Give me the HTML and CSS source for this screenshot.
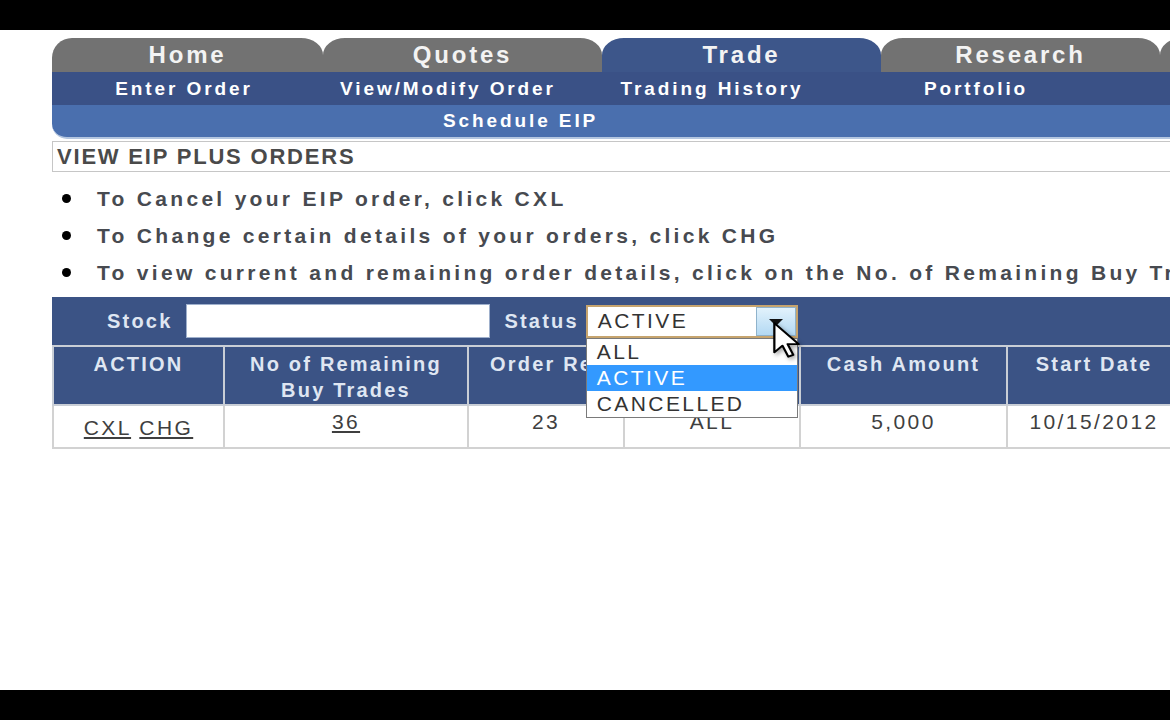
FILE: index.html
```html
<!DOCTYPE html>
<html lang="en">
<head>
<meta charset="utf-8">
<title>View EIP Plus Orders</title>
<link rel="stylesheet" href="styles.css">
</head>
<body>
<div class="screen">
  <div class="letterbox"></div>
  <main class="page">
    <nav class="nav">
      <div class="tabs">
        <a class="tab tab-home">Home</a>
        <a class="tab">Quotes</a>
        <a class="tab tab-active">Trade</a>
        <a class="tab">Research</a>
        <a class="tab"></a>
      </div>
      <div class="subnav">
        <a>Enter Order</a>
        <a>View/Modify Order</a>
        <a>Trading History</a>
        <a>Portfolio</a>
      </div>
      <div class="subnav2"><a>Schedule EIP</a></div>
    </nav>

    <h1 class="title">VIEW EIP PLUS ORDERS</h1>

    <ul class="notes">
      <li>To Cancel your EIP order, click CXL</li>
      <li>To Change certain details of your orders, click CHG</li>
      <li>To view current and remaining order details, click on the No. of Remaining Buy Trades</li>
    </ul>

    <div class="filter">
      <span class="filter-label">Stock</span>
      <input class="stock-input" type="text">
      <span class="filter-label status-label">Status</span>
      <div class="select">
        <span class="select-value">ACTIVE</span>
        <span class="select-btn"><span class="select-arrow"></span></span>
        <div class="select-list">
          <div class="option">ALL</div>
          <div class="option selected">ACTIVE</div>
          <div class="option">CANCELLED</div>
        </div>
        <svg class="cursor" viewBox="0 0 12 19" preserveAspectRatio="none" width="27" height="36">
          <path d="M0.6 0.6 L0.6 16 L4.2 12.5 L6.8 18.3 L9 17.3 L6.5 11.7 L11.4 11.7 Z" fill="#fff" stroke="#000" stroke-width="1" stroke-linejoin="round"/>
        </svg>
      </div>
    </div>

    <table class="orders">
      <colgroup>
        <col class="c1"><col class="c2"><col class="c3"><col class="c4"><col class="c5"><col class="c6">
      </colgroup>
      <thead>
        <tr>
          <th>ACTION</th>
          <th>No of Remaining Buy Trades</th>
          <th>Order Ref</th>
          <th></th>
          <th>Cash Amount</th>
          <th>Start Date</th>
        </tr>
      </thead>
      <tbody>
        <tr>
          <td class="action"><a>CXL</a> <a>CHG</a></td>
          <td><a>36</a></td>
          <td>23</td>
          <td>ALL</td>
          <td>5,000</td>
          <td>10/15/2012</td>
        </tr>
      </tbody>
    </table>
  </main>
  <div class="letterbox"></div>
</div>
</body>
</html>
```

FILE: styles.css
```css
html, body {
  margin: 0;
  padding: 0;
  background: #fff;
  overflow: hidden;
}

body {
  font-family: "Liberation Sans", Arial, sans-serif;
}

.screen {
  height: 720px;
  display: flex;
  flex-direction: column;
}

.letterbox {
  flex: none;
  height: 30px;
  background: #000;
}

.page {
  flex: 1;
  width: 1182px;
  box-sizing: border-box;
  padding: 8px 0 0 52px;
  overflow: hidden;
}

/* ---------- navigation ---------- */
.tabs {
  display: flex;
  height: 34px;
}

.tab {
  flex: none;
  width: 279px;
  height: 34px;
  background: #727272;
  color: #f3f3f3;
  border-radius: 22px 22px 0 0 / 17px 17px 0 0;
  font-size: 24px;
  font-weight: bold;
  letter-spacing: 2.8px;
  line-height: 34px;
  text-align: center;
}

.tab-home {
  width: 271px;
  border-top-left-radius: 20px 20px;
}

.tab-active {
  background: #3d568a;
}

.subnav {
  display: grid;
  grid-template-columns: repeat(5, 264px);
  height: 33px;
  background: #3a5186;
}

.subnav a,
.subnav2 a {
  color: #fff;
  font-size: 19px;
  font-weight: bold;
  letter-spacing: 2.9px;
  text-align: center;
}

.subnav a {
  line-height: 33px;
}

.subnav2 {
  height: 32px;
  background: #4a6fae;
  border-bottom: 2px solid #b4c6e0;
  border-bottom-left-radius: 15px;
  padding-left: 391px;
}

.subnav2 a {
  display: inline-block;
  line-height: 32px;
}

/* ---------- heading ---------- */
.title {
  margin: 2px 0 0;
  height: 29px;
  line-height: 29px;
  border: 1px solid #c6c6c6;
  padding-left: 4px;
  font-size: 22px;
  font-weight: bold;
  letter-spacing: 1.8px;
  color: #4a4a4a;
}

/* ---------- notes ---------- */
.notes {
  list-style: none;
  margin: 8px 0 0;
  padding: 0;
}

.notes li {
  display: flex;
  align-items: center;
  height: 37px;
  white-space: nowrap;
  font-size: 21px;
  font-weight: bold;
  letter-spacing: 3.3px;
  color: #474a50;
}

.notes li::before {
  content: "";
  flex: none;
  width: 9px;
  height: 9px;
  border-radius: 50%;
  background: #000;
  margin: 0 26px 0 10px;
}

/* ---------- filter bar ---------- */
.filter {
  margin-top: 6px;
  height: 48px;
  background: #3b5385;
  display: flex;
  align-items: center;
  padding-left: 55px;
}

.filter-label {
  font-size: 20px;
  font-weight: bold;
  letter-spacing: 2.2px;
  color: #dfe6f2;
}

.stock-input {
  margin: 0 0 0 14px;
  width: 304px;
  height: 34px;
  box-sizing: border-box;
  border: 1px solid #9fb0cc;
  background: #fff;
  padding: 0;
}

.status-label {
  margin-left: 14px;
}

.select {
  position: relative;
  margin-left: 7px;
  width: 212px;
  height: 33px;
  box-sizing: border-box;
  border: 2px solid #c6a46e;
  background: #fff;
  display: flex;
  align-items: center;
}

.select-value {
  flex: 1;
  padding-left: 10px;
  font-size: 21px;
  letter-spacing: 2.4px;
  color: #333;
}

.select-btn {
  flex: none;
  width: 40px;
  height: 29px;
  box-sizing: border-box;
  border: 1px solid #8fb3cc;
  background: linear-gradient(#e2f2fc, #b3d9f3);
  display: flex;
  align-items: center;
  justify-content: center;
}

.select-arrow {
  width: 0;
  height: 0;
  border-left: 7px solid transparent;
  border-right: 7px solid transparent;
  border-top: 7px solid #111;
  margin-top: 2px;
}

.select-list {
  position: absolute;
  top: calc(100% + 2px);
  left: -2px;
  width: 212px;
  box-sizing: border-box;
  border: 1px solid #7a7a7a;
  background: #fff;
  z-index: 5;
}

.option {
  height: 26px;
  line-height: 26px;
  padding-left: 10px;
  font-size: 21px;
  letter-spacing: 2.4px;
  color: #333;
}

.option.selected {
  background: #3399ff;
  color: #fff;
}

.cursor {
  position: absolute;
  left: 185px;
  top: 15px;
  z-index: 6;
  filter: drop-shadow(2px 2px 2px rgba(0, 0, 0, 0.35));
}

/* ---------- table ---------- */
.orders {
  width: 1128px;
  table-layout: fixed;
  border-collapse: collapse;
  border: 2px solid #cdd1d8;
}

.c1 { width: 171px; }
.c2 { width: 244px; }
.c3 { width: 156px; }
.c4 { width: 176px; }
.c5 { width: 207px; }
.c6 { width: 174px; }

.orders th {
  background: #3b5385;
  color: #dfe6f2;
  font-size: 20px;
  font-weight: bold;
  letter-spacing: 2.2px;
  line-height: 26px;
  padding: 4px 0 1px;
  vertical-align: top;
  text-align: center;
  border: 2px solid #c9ced6;
  white-space: normal;
}

.orders td {
  background: #fff;
  color: #3f3f3f;
  font-size: 21px;
  letter-spacing: 2.4px;
  line-height: 26px;
  padding: 3px 0 12px;
  vertical-align: top;
  text-align: center;
  border: 2px solid #d2d2d2;
  white-space: nowrap;
}

.orders td.action {
  padding: 9px 0 6px;
}

.orders a {
  color: inherit;
  text-decoration: underline;
}
```
